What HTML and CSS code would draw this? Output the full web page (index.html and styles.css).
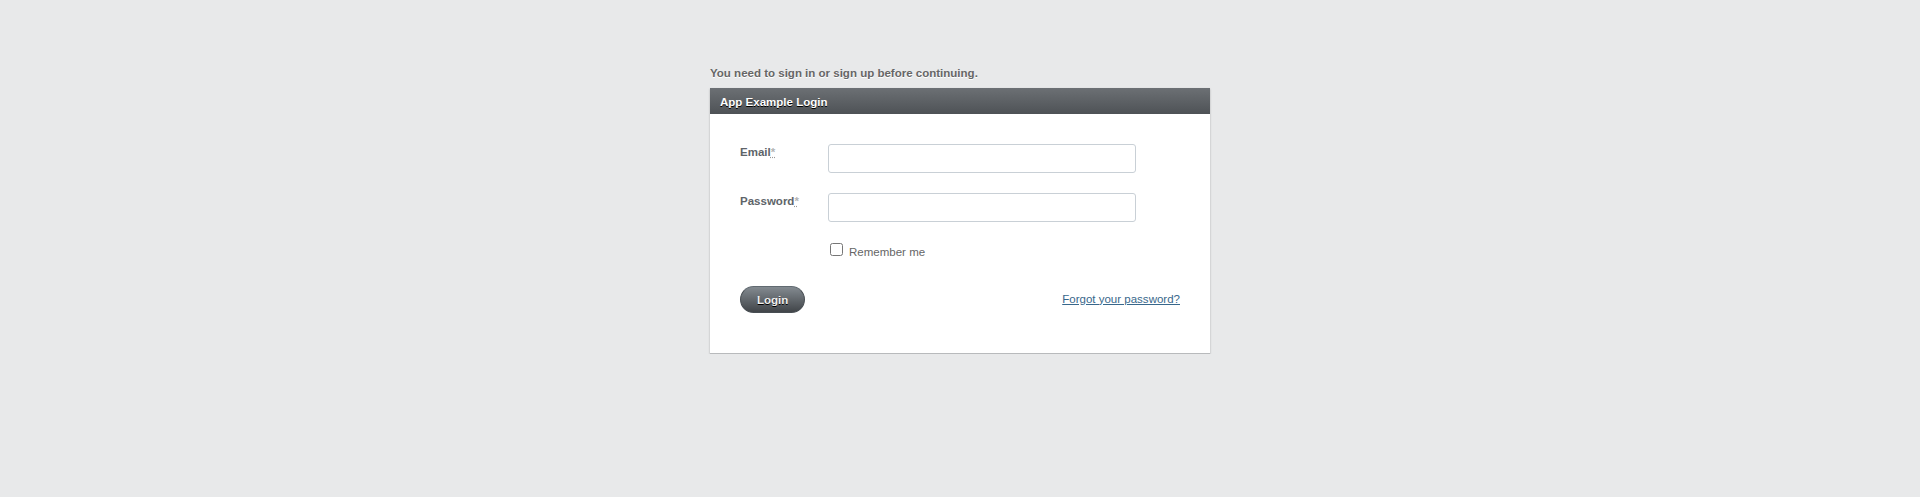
FILE: index.html
```html
<!DOCTYPE html>
<html lang="en">
<head>
<meta charset="utf-8">
<title>App Example Login</title>
<link rel="stylesheet" href="styles.css">
</head>
<body>
<div class="wrapper">
  <p class="flash">You need to sign in or sign up before continuing.</p>
  <div class="panel">
    <h2 class="panel-title">App Example Login</h2>
    <form class="login-form">
      <div class="row">
        <label class="label" for="email">Email<abbr title="required">*</abbr></label>
        <input class="text-input" id="email" type="email">
      </div>
      <div class="row">
        <label class="label" for="password">Password<abbr title="required">*</abbr></label>
        <input class="text-input" id="password" type="password">
      </div>
      <div class="row remember-row">
        <label class="remember"><input class="check" type="checkbox"><span>Remember me</span></label>
      </div>
      <div class="actions">
        <button class="btn" type="button">Login</button>
        <a class="forgot" href="#">Forgot your password?</a>
      </div>
    </form>
  </div>
</div>
</body>
</html>
```
FILE: styles.css
```css
html, body {
  margin: 0;
  padding: 0;
}
body {
  background: #e8e9ea;
  font-family: "Liberation Sans", Arial, Helvetica, sans-serif;
  font-size: 11.52px;
  line-height: 17.28px;
  color: #323537;
}
.wrapper {
  width: 500px;
  margin: 0 auto;
  padding-top: 67px;
}
.flash {
  margin: 0 0 9px 0;
  padding: 0;
  color: #666;
  font-weight: bold;
  line-height: 12px;
  text-shadow: 0 1px 0 #fff;
}
.panel {
  background: #fff;
  box-shadow: 0 1px 2px rgba(0, 0, 0, 0.25);
  border-bottom: 1px solid #b8babc;
  padding-bottom: 40px;
}
.panel-title {
  margin: 0;
  padding: 5px 10px 3px 10px;
  font-size: 11.52px;
  line-height: 18px;
  font-weight: bold;
  color: #fff;
  text-shadow: 0 1px 0 #000;
  background: linear-gradient(to bottom, #6c7074 0%, #4e5256 100%);
}
.login-form {
  padding: 30px 30px 0 30px;
}
.row {
  display: flex;
  align-items: flex-start;
  margin-bottom: 20px;
}
.label {
  width: 88px;
  flex: none;
  font-weight: bold;
  color: #5e6469;
}
.label abbr {
  color: #b3b3b3;
  font-weight: bold;
  text-decoration: underline dotted;
  text-decoration-color: #999;
}
.text-input {
  box-sizing: border-box;
  width: 308px;
  height: 29px;
  margin: 0;
  padding: 8px 10px 7px;
  border: 1px solid #c9d0d6;
  border-radius: 3px;
  background: #fff;
  font: inherit;
  outline: none;
}
.remember-row {
  margin-top: 21px;
  margin-bottom: 25px;
  padding-left: 90px;
  height: 18px;
}
.remember {
  display: flex;
  align-items: flex-start;
  color: #666;
}
.check {
  width: 13px;
  height: 13px;
  margin: 0 6px 0 0;
}
.remember span {
  margin-top: 1px;
}
.actions {
  display: flex;
  align-items: center;
  justify-content: space-between;
}
.btn {
  box-sizing: border-box;
  height: 27px;
  padding: 7px 16px 6px;
  border: 1px solid #484e53;
  border-top-color: #616a71;
  border-radius: 200px;
  background: linear-gradient(to bottom, #838a90 0%, #414549 100%);
  color: #efefef;
  font-family: inherit;
  font-size: 11.52px;
  font-weight: bold;
  line-height: 12px;
  text-shadow: 0 1px 0 #000;
  cursor: pointer;
}
.forgot {
  color: #38678b;
  text-decoration: underline;
}
```
